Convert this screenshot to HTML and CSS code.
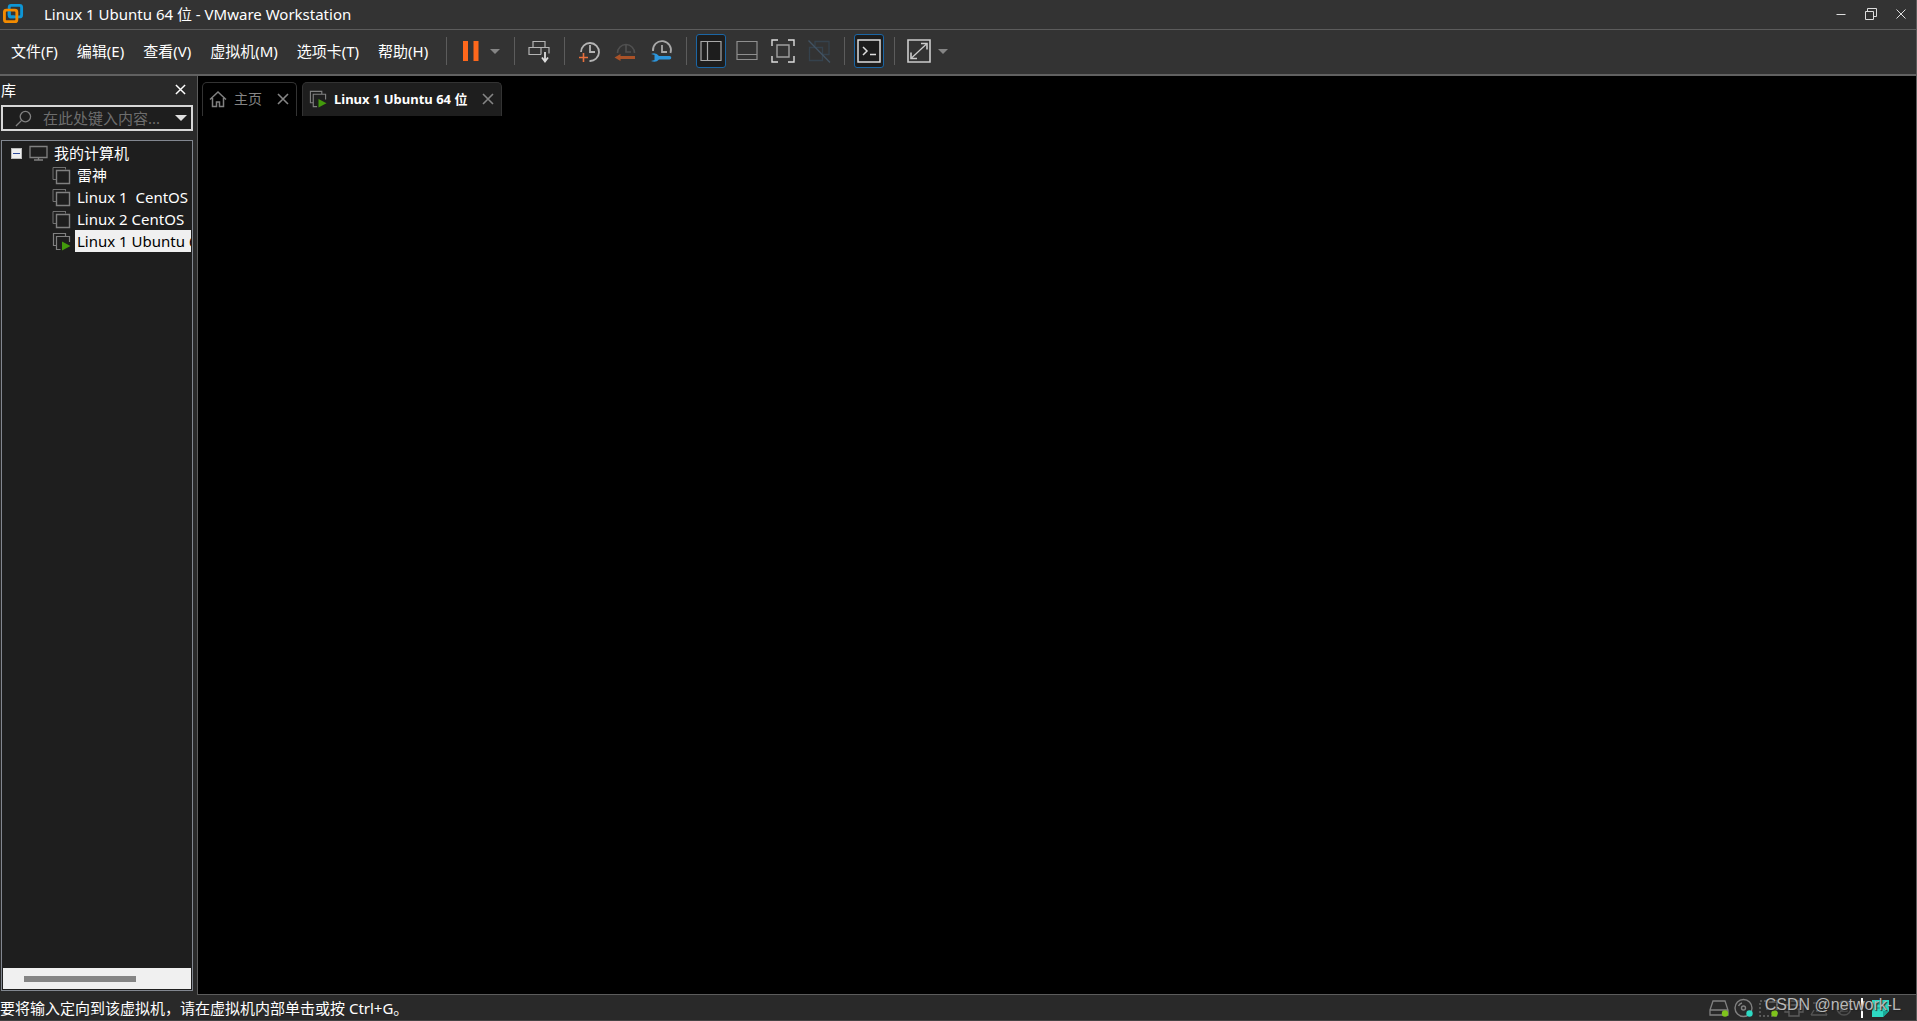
FILE: index.html
```
<!DOCTYPE html>
<html lang="zh-CN">
<head>
    <meta charset="UTF-8">
    <meta name="viewport" content="width=device-width, initial-scale=1.0">
    <title>Linux 1 Ubuntu 64 位 - VMware Workstation</title>
    <link rel="stylesheet" href="styles.css">
</head>
<body>

<svg class="sprite" aria-hidden="true">
    <symbol id="vm" viewBox="0 0 19 19">
        <path d="M1 13.500V1.500h12.500M13.500 1v2.500M1 13.500h3" fill="none" stroke="#707070"/>
        <path d="M4.500 4.500h13v13h-13z" fill="none" stroke="#808080" stroke-width="1.400"/>
    </symbol>
    <symbol id="vm-on" viewBox="0 0 19 19">
        <path d="M4 13.500H1.500v-12h12V4M8.500 17.500h-4v-13h13V10" fill="none" stroke="#808080" stroke-width="1.200"/>
        <path d="M10 9.500v9l8.500-4.500z" fill="#439a0c"/>
    </symbol>
    <symbol id="close" viewBox="0 0 12 12">
        <path d="M1 1l10 10M11 1L1 11" fill="none" stroke="currentColor" stroke-width="1.600"/>
    </symbol>
</svg>

<header class="titlebar">
    <svg class="logo" viewBox="0 0 22 22" fill="none" stroke-width="3">
        <rect x="6.500" y="2.500" width="13" height="12" rx="2" stroke="#0e96d6"/>
        <rect x="1.500" y="7.500" width="13" height="12" rx="2" stroke="#f38b00"/>
        <path d="M6.500 9v3.500a2 2 0 0 0 2 2H12" stroke="#0e96d6"/>
    </svg>
    <h1>Linux 1 Ubuntu 64 位 - VMware Workstation</h1>
    <div class="window-buttons">
        <button aria-label="最小化"><svg viewBox="0 0 12 12"><path d="M1.500 6.500h9" stroke="#ddd"/></svg></button>
        <button aria-label="还原"><svg viewBox="0 0 12 12" fill="none" stroke="#ddd"><path d="M.5 3.500h8v8h-8zM2.500 3V.5h9v8H9"/></svg></button>
        <button aria-label="关闭"><svg viewBox="0 0 12 12" stroke="#ddd"><path d="M1.500 1.500l9 9M10.500 1.500l-9 9"/></svg></button>
    </div>
</header>

<div class="menubar">
    <nav class="menu">
        <button>文件(F)</button>
        <button>编辑(E)</button>
        <button>查看(V)</button>
        <button>虚拟机(M)</button>
        <button>选项卡(T)</button>
        <button>帮助(H)</button>
    </nav>
    <div class="toolbar">
        <div class="group">
            <button aria-label="挂起"><svg viewBox="0 0 24 24"><path d="M4 2h5v20H4zM14.500 2h5v20h-5z" fill="#ff681c"/></svg></button>
            <button class="drop" aria-label="电源选项"><span class="caret"></span></button>
        </div>
        <div class="group">
            <button aria-label="发送 Ctrl+Alt+Del">
                <svg viewBox="0 0 24 24" fill="none" stroke="#b4b4b4" stroke-width="1.200"><path d="M6 8.500v-6h12v6M14 15.500H2v-7h20v6M14 8.500v7"/><path d="M18 13v9M15 18.500l3 4 3-4" stroke="#ddd" stroke-width="1.800"/></svg>
            </button>
        </div>
        <div class="group">
            <button aria-label="拍摄快照">
                <svg viewBox="0 0 24 24" fill="none"><path d="M4 13a9 9 0 1 1 8.500 9M13 6v7h5" stroke="#b4b4b4" stroke-width="1.800"/><path d="M6.500 14v9M2 18.500h9" stroke="#e8703d" stroke-width="1.600"/></svg>
            </button>
            <button aria-label="恢复快照">
                <svg viewBox="0 0 24 24" fill="none"><path d="M4.500 14a8.500 8.500 0 1 1 17 0M13 6v7h5" stroke="#505050" stroke-width="1.600"/><path d="M1.500 18.500l6-3.500v2H22v3H7.500v2z" fill="#a95228"/></svg>
            </button>
            <button aria-label="管理快照">
                <svg viewBox="0 0 24 24" fill="none"><path d="M4 12a9 9 0 1 1 17.500 2M13 6v7h5" stroke="#a8a8a8" stroke-width="1.800"/><path d="M2 15q5-2 8 2h10.500a1.800 1.800 0 0 1 0 3.600H10q-3 3.500-8 1.400l3.500-1v-5z" fill="#2d96dc"/></svg>
            </button>
        </div>
        <div class="group">
            <button class="pressed" aria-label="显示库">
                <svg viewBox="0 0 24 24" fill="none" stroke="#a8a8a8" stroke-width="1.200"><path d="M2 2.500h20v19H2zM8.500 2.500v19"/></svg>
            </button>
            <button aria-label="显示缩略图栏">
                <svg viewBox="0 0 24 24" fill="none" stroke="#8f8f8f" stroke-width="1.200"><path d="M2 2.500h20v18H2zM2 15.500h20"/></svg>
            </button>
            <button aria-label="全屏">
                <svg viewBox="0 0 24 24" fill="none" stroke="#ddd" stroke-width="1.400"><path d="M1 7V1h6M17 1h6v6M23 17v6h-6M7 23H1v-6"/><path d="M6 6h12v12H6z" stroke="#a0a0a0"/></svg>
            </button>
            <button aria-label="Unity" disabled>
                <svg viewBox="0 0 24 24" fill="none" stroke="#35424d" stroke-width="1.300"><path d="M8 7V2.500h14v13h-6M2.500 8.500h13v13h-13z"/><path d="M1.500 1.500L23 23.500" stroke="#425363"/></svg>
            </button>
        </div>
        <div class="group">
            <button class="pressed" aria-label="控制台视图">
                <svg viewBox="0 0 24 24" fill="none" stroke="#ddd" stroke-width="1.500"><path d="M1 1h22v22H1z"/><path d="M6 8l4 4-4 4M13 15.500h6"/></svg>
            </button>
        </div>
        <div class="group">
            <button aria-label="自由拉伸">
                <svg viewBox="0 0 24 24" fill="none" stroke="#ccc" stroke-width="1.600"><path d="M1 1h22v22H1z"/><path d="M14 4.500h6v6M10 19.500H4v-6"/><path d="M19.500 5L4.500 19" stroke-width="1.200"/></svg>
            </button>
            <button class="drop" aria-label="拉伸选项"><span class="caret"></span></button>
        </div>
    </div>
</div>

<div class="workspace">
    <aside class="library">
        <div class="library-head">
            <h2>库</h2>
            <button aria-label="关闭库"><svg viewBox="0 0 12 12"><use href="#close"/></svg></button>
        </div>
        <div class="search">
            <svg viewBox="0 0 18 18" fill="none" stroke="#808080" stroke-width="1.400"><circle cx="11" cy="7" r="5.500"/><path d="M7 11l-6 6"/></svg>
            <input type="text" aria-label="搜索" placeholder="在此处键入内容...">
            <button aria-label="搜索选项"><span class="caret"></span></button>
        </div>
        <div class="tree">
            <ul>
                <li class="root">
                    <button class="toggle" aria-label="折叠"></button>
                    <svg viewBox="0 0 19 19" fill="none" stroke="#808080" stroke-width="1.300"><path d="M1 2.500h17v11H1zM9.500 13.500V16M5 16h9"/></svg>
                    <span>我的计算机</span>
                </li>
                <li><svg viewBox="0 0 19 19"><use href="#vm"/></svg><span>雷神</span></li>
                <li><svg viewBox="0 0 19 19"><use href="#vm"/></svg><span>Linux 1&nbsp; CentOS</span></li>
                <li><svg viewBox="0 0 19 19"><use href="#vm"/></svg><span>Linux 2 CentOS</span></li>
                <li class="selected"><svg viewBox="0 0 19 19"><use href="#vm-on"/></svg><span>Linux 1 Ubuntu 64 位</span></li>
            </ul>
            <div class="scrollbar"><div class="thumb"></div></div>
        </div>
    </aside>

    <main class="console">
        <div class="tabs">
            <div class="tab">
                <svg viewBox="0 0 18 18" fill="none" stroke="#808080" stroke-width="1.500"><path d="M1 9.500L9 2l8 7.500M3.500 8v8.500h4V12h3v4.500h4V8"/></svg>
                <a href="#">主页</a>
                <button aria-label="关闭标签页"><svg viewBox="0 0 12 12"><use href="#close"/></svg></button>
            </div>
            <div class="tab active">
                <svg viewBox="0 0 19 19"><use href="#vm-on"/></svg>
                <a href="#">Linux 1 Ubuntu 64 位</a>
                <button aria-label="关闭标签页"><svg viewBox="0 0 12 12"><use href="#close"/></svg></button>
            </div>
        </div>
    </main>
</div>

<footer class="statusbar">
    <p>要将输入定向到该虚拟机，请在虚拟机内部单击或按 Ctrl+G。</p>
    <div class="devices">
        <svg viewBox="0 0 20 20" fill="none" stroke="#808080" stroke-width="1.300"><path d="M1 12L4 3h12l3 9v5H1zM1 12h18"/><circle cx="16" cy="15.500" r="3.200" fill="#7fc31c" stroke="none"/></svg>
        <svg viewBox="0 0 20 20" fill="none" stroke="#808080" stroke-width="1.400"><circle cx="9.500" cy="10" r="8.500"/><circle cx="9.500" cy="10" r="2"/><path d="M4.500 8A5 5 0 0 1 8 5"/><circle cx="15.500" cy="15.500" r="3.200" fill="#2ed9c3" stroke="none"/></svg>
        <svg viewBox="0 0 20 20" fill="none" stroke="#6a6a6a" stroke-width="1.400"><path d="M1 3h17v15H1z" stroke-dasharray="2 2"/><path d="M8 4h10v7H8z"/><circle cx="15.500" cy="15.500" r="3.200" fill="#7fc31c" stroke="none"/></svg>
        <svg viewBox="0 0 20 20" fill="none" stroke="#5c5c5c" stroke-width="1.400"><path d="M5 7V3h10v4M5 14H1V7h18v7h-4M5 11h10v7H5z"/></svg>
        <svg viewBox="0 0 20 20" fill="none" stroke="#555" stroke-width="1.400"><path d="M2 17h16M5 12l-3 5M15 12l3 5M4 5h11M7 13h6"/></svg>
        <svg viewBox="0 0 20 20" fill="none" stroke="#505050" stroke-width="1.400"><circle cx="10" cy="10" r="7"/><path d="M5 15L15 5M7 8h6v5H7z"/></svg>
        <span class="divider"></span>
        <svg viewBox="0 0 20 20"><path d="M2 2h17v11l-6 6H2z" fill="#2ed9c3"/><path d="M13 19v-6h6" fill="#19a896"/><path d="M5 6h10M5 10h8" stroke="#1e8f82"/></svg>
    </div>
    <span class="watermark">CSDN @network-L</span>
</footer>

</body>
</html>
```
FILE: styles.css
```
* {
    box-sizing: border-box;
}

body {
    margin: 0;
    height: 100vh;
    display: flex;
    flex-direction: column;
    background: #292929;
    border-right: 1px solid #5c5c5c;
    border-bottom: 1px solid #444;
    color: #fff;
    font-family: "Noto Sans", "Noto Sans CJK SC", sans-serif;
    font-size: 15px;
    line-height: 22px;
    overflow: hidden;
}

h1, h2, p, ul {
    margin: 0;
    padding: 0;
    font-size: 15px;
    font-weight: normal;
}

button {
    display: flex;
    align-items: center;
    justify-content: center;
    padding: 0;
    border: 0;
    background: none;
    color: inherit;
    font: inherit;
}

svg {
    display: block;
    flex: none;
}

.sprite {
    position: absolute;
    width: 0;
    height: 0;
}

/* Title bar */
.titlebar {
    display: flex;
    align-items: center;
    height: 30px;
    padding: 0 9px 2px 3px;
    background: #333;
    border-bottom: 1px solid #5c5c5c;
}

.logo {
    width: 21px;
    height: 21px;
    margin-right: 20px;
}

.window-buttons {
    display: flex;
    gap: 18px;
    margin-left: auto;
}

.window-buttons svg {
    width: 12px;
    height: 12px;
}

/* Menu and toolbar */
.menubar {
    display: flex;
    align-items: center;
    height: 46px;
    padding-bottom: 2px;
    background: #333;
    border-bottom: 2px solid #616161;
}

.menu {
    display: flex;
    gap: 19px;
    padding: 0 18px 0 11px;
}

.toolbar {
    display: flex;
}

.group {
    display: flex;
    align-items: center;
    gap: 6px;
    padding-right: 10px;
}

.group::before {
    content: "";
    width: 1px;
    height: 28px;
    margin-right: 3px;
    background: #5c5c5c;
}

.toolbar button {
    width: 30px;
    height: 34px;
    border: 1px solid transparent;
    border-radius: 3px;
}

.toolbar svg {
    width: 24px;
    height: 24px;
}

.toolbar .pressed {
    background: #1d1d1d;
    border: 1px solid #1b66a5;
}

.toolbar .drop {
    width: 18px;
    margin-left: -6px;
}

.caret {
    border: 5px solid transparent;
    border-top-color: #858585;
    border-bottom: 0;
}

/* Library */
.workspace {
    display: flex;
    flex: 1;
    min-height: 0;
}

.library {
    display: flex;
    flex-direction: column;
    width: 197px;
    padding: 0 4px 4px 1px;
}

.library-head {
    display: flex;
    align-items: center;
    justify-content: space-between;
    height: 29px;
    padding: 0 7px 2px 0;
}

.library-head svg {
    width: 11px;
    height: 11px;
}

.search {
    display: flex;
    align-items: center;
    height: 26px;
    margin-bottom: 9px;
    padding: 0 4px 0 12px;
    background: #1e1e1e;
    border: 2px solid #d8d8d8;
}

.search svg {
    width: 17px;
    height: 17px;
}

.search input {
    flex: 1;
    min-width: 0;
    padding: 0 0 0 11px;
    border: 0;
    background: none;
    color: #fff;
    font: inherit;
}

.search input::placeholder {
    color: #6d6d6d;
}

.search .caret {
    border-width: 6px 6px 0;
    border-top-color: #e0e0e0;
}

.tree {
    display: flex;
    flex: 1;
    flex-direction: column;
    justify-content: space-between;
    padding: 1px;
    background: #1e1e1e;
    border: 1px solid #828790;
}

.tree ul {
    list-style: none;
}

.tree li {
    display: flex;
    align-items: center;
    height: 22px;
    padding-left: 49px;
    overflow: hidden;
    white-space: nowrap;
}

.tree li svg {
    width: 19px;
    height: 19px;
}

.tree li span {
    flex: 1;
    margin-left: 4px;
    padding-left: 2px;
}

.tree .root {
    padding-left: 8px;
}

.tree .root svg {
    margin-left: 7px;
}

.toggle {
    width: 11px;
    height: 11px;
    background: #eee;
    border: 1px solid #bbb;
}

.toggle::before {
    content: "";
    width: 7px;
    height: 1px;
    background: #2d4a9c;
}

.tree .selected span {
    background: #f0f0f0;
    color: #000;
}

.scrollbar {
    display: flex;
    align-items: center;
    height: 21px;
    padding-left: 21px;
    background: #f0f0f0;
}

.thumb {
    width: 67%;
    height: 6px;
    background: #858585;
}

/* Console area */
.console {
    flex: 1;
    background: #000;
    border-left: 1px solid #5c5c5c;
    border-bottom: 1px solid #5c5c5c;
}

.tabs {
    display: flex;
    gap: 5px;
    padding: 6px 4px;
}

.tab {
    display: flex;
    align-items: center;
    height: 34px;
    padding: 0 7px 2px 6px;
    border: 1px solid #333;
    border-bottom: 0;
    border-radius: 5px 5px 0 0;
    color: #858585;
}

.tab > svg {
    width: 18px;
    height: 18px;
}

.tab a {
    margin: 0 15px 0 7px;
    color: inherit;
    font-size: 14px;
    text-decoration: none;
}

.tab button svg {
    width: 12px;
    height: 12px;
}

.tab.active {
    background: #1e1e1e;
}

.tab.active a {
    color: #fff;
    font-size: 13px;
    font-weight: bold;
}

/* Status bar */
.statusbar {
    position: relative;
    display: flex;
    align-items: center;
    justify-content: space-between;
    height: 25px;
    padding-right: 26px;
}

.devices {
    display: flex;
    align-items: center;
    gap: 5px;
}

.devices svg {
    width: 20px;
    height: 20px;
}

.divider {
    width: 2px;
    height: 20px;
    margin: 0 2px;
    background: #fff;
}

/* Sits over the device icons */
.watermark {
    position: absolute;
    right: 15px;
    bottom: 4px;
    color: #b8b8b8;
    font-family: "Liberation Sans", sans-serif;
    font-size: 16px;
    text-shadow: 1px 1px 1px #222;
}
```
